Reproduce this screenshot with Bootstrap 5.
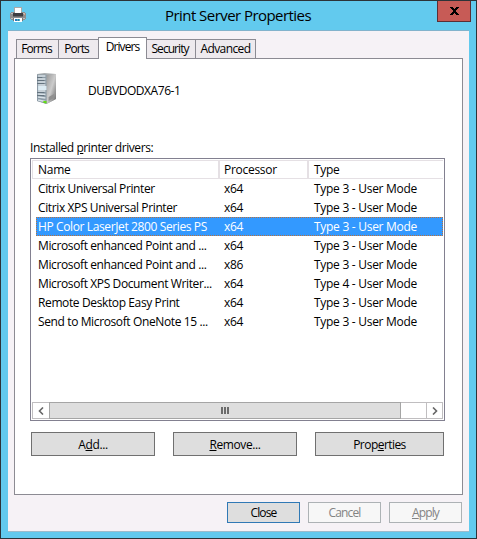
<!DOCTYPE html>
<html lang="en">
<head>
<meta charset="utf-8">
<meta name="viewport" content="width=device-width, initial-scale=1">
<title>Print Server Properties</title>
<link href="https://cdn.jsdelivr.net/npm/bootstrap@5.3.0/dist/css/bootstrap.min.css" rel="stylesheet">
<style>
body{font:12px/19px "Open Sans","Noto Sans",sans-serif;color:#000;overflow:hidden}
.win{width:477px;height:539px;background:#62caee;border:1px solid #2c3338}
.titlebar{height:29px;padding-left:8px}
.titlebar svg{margin-top:5px}
.caption{font-size:15px;line-height:29px;letter-spacing:-.55px;margin-left:138px;white-space:nowrap}
.close-x{width:34px;height:21px;background:#c75b56;border:1px solid #5b2e35;border-top:0;margin-right:5px}
.titlebar .close-x svg{margin-top:0}
.client{margin:0 7px;height:502px;background:#f6f2f6;border-top:1px solid #82b3cc;border-bottom:1px solid #9dbccb;padding:7px 6px 0}
.tabs{height:20px;padding-left:2px}
.tabs .nav-link{height:19px;padding:0;border:1px solid #8c8b93;border-bottom:0;border-radius:0;background:#eeeaee;color:#000;font-size:12px;letter-spacing:-.95px;line-height:18px;text-align:center;margin-right:-1px;white-space:nowrap}
.tabs .nav-link.active{height:22px;background:#fff;position:relative;z-index:2;margin-bottom:-1px;line-height:18px;color:#000}
.tabs .wide{letter-spacing:-.6px}
.sheet{width:449px;height:437px;background:#fff;border:1px solid #8c8b93;padding:14px 15px 0}
.server{height:65px;padding-left:6px}
.server span{margin-left:31px;line-height:36px;letter-spacing:-.43px}
.label-text{height:20px;letter-spacing:-.42px}
.drivers{width:415px;height:263px;border:1px solid #828090;padding:1px}
.cells{display:grid;grid-template-columns:186px 90px 1fr;white-space:nowrap;letter-spacing:-.28px}
.cells.head{height:19px;border:1px solid #e5e0e4;border-right:0;line-height:18px;grid-template-columns:185px 89px 1fr}
.head>div{padding-left:5px}
.head>div+div{border-left:2px solid #e5e0e4;padding-left:4px}
.head>div:last-child{padding-left:5px}
.line{height:19px;margin-left:4px;padding-left:2px}
.line>div:first-child{letter-spacing:-.38px}
.line.sel{background:#3399ff;color:#fff;outline:1px dotted #b9713d;outline-offset:-1px}
.scroll{height:17px;border:1px solid #c0bec0;background:#fff}
.scroll .arrow{width:16px}
.scroll .arrow.next{border-left:1px solid #c0bec0}
.thumb{width:352px;height:17px;margin-top:-1px;background:#dedede;border:1px solid #a5a5a5;gap:1px}
.thumb i{width:2px;height:7px;background:#6b6b6b}
.btn.w{--bs-btn-padding-x:0;--bs-btn-padding-y:0;font-size:12px;letter-spacing:-.4px;line-height:21px;border-radius:0;height:24px;width:124px;background:#dedede;border:1px solid #707070;color:#000;white-space:nowrap}
.btn.w.b{width:73px;height:21px;line-height:19px;letter-spacing:-.85px}
.btn.w.def{border-color:#3079b5}
.btn.w.off{background:#f7f7f7;border-color:#adb2b5;color:#838383;opacity:1}
</style>
</head>
<body>
<main class="win d-flex flex-column">
  <header class="titlebar d-flex align-items-start">
    <svg width="18" height="18" viewBox="0 0 18 18" shape-rendering="crispEdges">
      <path fill="#aaa" d="M5 1h8v6H5z"/><path fill="#fff" d="M6 2h6v5H6z"/>
      <path fill="#8e8e8e" d="M2 6h14v1h1v6h-1v1H2v-1H1V7h1z"/><path fill="#c0bebe" d="M2 7h2v1H2zM14 7h2v1h-2zM2 12h14v1H2z"/>
      <path fill="#fff" d="M6 5h6v2H6z"/><path fill="#3e3e42" d="M4 7h10v4H4z"/><path fill="#68686c" d="M4 10h10v1H4z"/>
      <path fill="#e7a582" d="M15 8h1v1h-1z"/><path fill="#777" d="M4 12h10v3H4z"/>
      <path fill="#fff" d="M5 12h8v4H5z"/><path fill="#2776be" d="M6 13h2v2H6zM9 13h1v2H9z"/><path fill="#58b6b0" d="M8 13h1v2H8zM10 13h1v2h-1z"/>
    </svg>
    <div class="caption">Print Server Properties</div>
    <div class="close-x ms-auto d-flex justify-content-center align-items-center">
      <svg width="9" height="8" viewBox="0 0 9 8" shape-rendering="crispEdges"><path d="M0 0h3v1h1v1h1V1h1V0h3v1H8v1H7v1H6v2h1v1h1v1h1v1H6V7H5V6H4v1H3v1H0V7h1V6h1V5h1V3H2V2H1V1H0z"/></svg>
    </div>
  </header>
  <section class="client">
    <nav class="nav tabs flex-nowrap align-items-end">
      <a class="nav-link" style="width:43px;padding-right:2px">Forms</a>
      <a class="nav-link" style="width:41px;padding-right:4px">Ports</a>
      <a class="nav-link active" style="width:49px">Drivers</a>
      <a class="nav-link" style="width:50px;padding-right:2px">Security</a>
      <a class="nav-link wide" style="width:61px">Advanced</a>
    </nav>
    <div class="sheet">
      <div class="server d-flex align-items-start">
        <svg width="21" height="32" viewBox="0 0 20 32" preserveAspectRatio="none">
          <defs><linearGradient id="side" x2="1" y2="1"><stop stop-color="#999"/><stop offset=".5" stop-color="#ccc"/><stop offset="1" stop-color="#666"/></linearGradient></defs>
          <path d="M1 1 8 0l11 1v25l-9 5-9-3z" fill="#a9adaf"/>
          <path d="M10 2l9-1v25l-9 5z" fill="url(#side)"/>
          <path d="M1 1.500h9V31l-9-3z" fill="#8c9ba6"/>
          <path d="M2 3h7M2 6h7M2 9h7M2 12h7M2 18h7M2 21l7 .5M2 24l7 1M2 27l7 1.500" stroke="#d9e2e8" stroke-width="1.300"/>
          <path d="M2 13h8v4H2z" fill="#dcebf3"/><path d="M1 4.500h5M1 7.500h7M1 10.500h7M1 19.500h7M1 22.500h7" stroke="#5b6975" stroke-width=".8"/>
          <path d="m12 24 5-3v4l-5 3z" fill="#909090"/><path d="M7 28h3v2.500l-3-.8z" fill="#63dc13"/>
        </svg>
        <span>DUBVDODXA76-1</span>
      </div>
      <div class="label-text">Installed <u>p</u>rinter drivers:</div>
      <div class="drivers d-flex flex-column">
        <div class="cells head"><div>Name</div><div>Processor</div><div>Type</div></div>
        <div class="cells line"><div>Citrix Universal Printer</div><div>x64</div><div>Type 3 - User Mode</div></div>
        <div class="cells line"><div>Citrix XPS Universal Printer</div><div>x64</div><div>Type 3 - User Mode</div></div>
        <div class="cells line sel"><div>HP Color LaserJet 2800 Series PS</div><div>x64</div><div>Type 3 - User Mode</div></div>
        <div class="cells line"><div>Microsoft enhanced Point and ...</div><div>x64</div><div>Type 3 - User Mode</div></div>
        <div class="cells line"><div>Microsoft enhanced Point and ...</div><div>x86</div><div>Type 3 - User Mode</div></div>
        <div class="cells line"><div>Microsoft XPS Document Writer...</div><div>x64</div><div>Type 4 - User Mode</div></div>
        <div class="cells line"><div>Remote Desktop Easy Print</div><div>x64</div><div>Type 3 - User Mode</div></div>
        <div class="cells line"><div>Send to Microsoft OneNote 15 ...</div><div>x64</div><div>Type 3 - User Mode</div></div>
        <div class="scroll mt-auto d-flex">
          <div class="arrow d-flex align-items-center justify-content-center"><svg width="6" height="8"><path d="M5 .5 1.500 4 5 7.500" fill="none" stroke="#666" stroke-width="1.600"/></svg></div>
          <div class="thumb d-flex align-items-center justify-content-center"><i></i><i></i><i></i></div>
          <div class="arrow next ms-auto d-flex align-items-center justify-content-center"><svg width="6" height="8"><path d="M1 .5 4.500 4 1 7.500" fill="none" stroke="#666" stroke-width="1.600"/></svg></div>
        </div>
      </div>
      <div class="d-flex" style="margin:11px 0 0 1px;gap:18px">
        <button class="btn w">A<u>d</u>d...</button>
        <button class="btn w"><u>R</u>emove...</button>
        <button class="btn w" style="width:129px;letter-spacing:-.55px">Prop<u>e</u>rties</button>
      </div>
    </div>
    <div class="d-flex justify-content-end" style="margin:7px 1px 0 0;gap:8px">
      <button class="btn w b def">Close</button>
      <button class="btn w b off">Cancel</button>
      <button class="btn w b off"><u>A</u>pply</button>
    </div>
  </section>
</main>
<script src="https://cdn.jsdelivr.net/npm/bootstrap@5.3.0/dist/js/bootstrap.bundle.min.js"></script>
</body>
</html>
